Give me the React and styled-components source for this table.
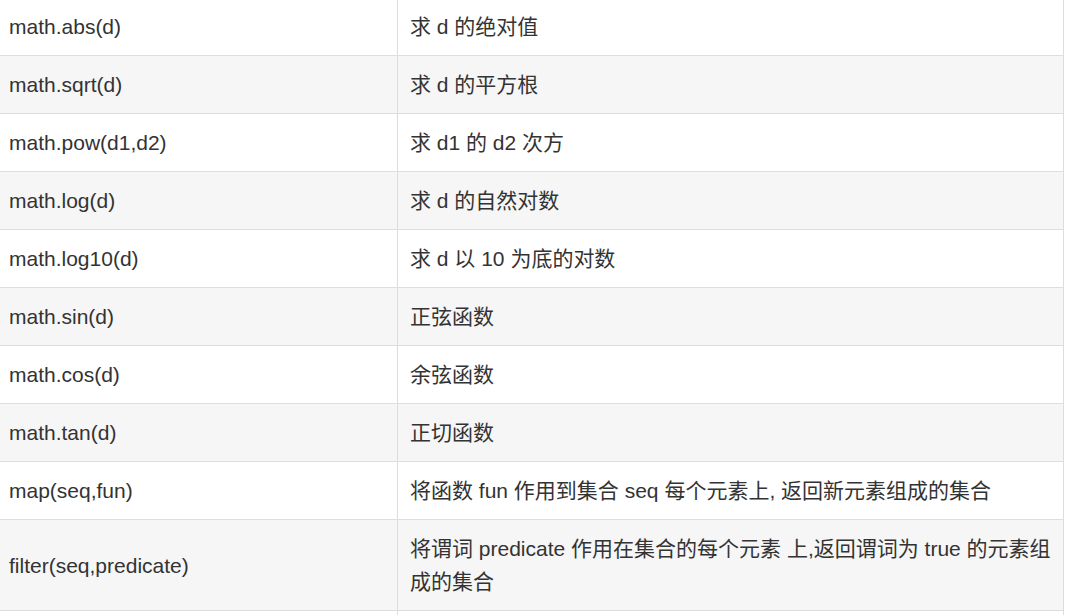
import styled, { createGlobalStyle } from "styled-components";

const GlobalStyle = createGlobalStyle`
  html, body {
    margin: 0;
    padding: 0;
    background: #ffffff;
    overflow: hidden;
  }
`;

const rows = [
  ["math.abs(d)", "求 d 的绝对值"],
  ["math.sqrt(d)", "求 d 的平方根"],
  ["math.pow(d1,d2)", "求 d1 的 d2 次方"],
  ["math.log(d)", "求 d 的自然对数"],
  ["math.log10(d)", "求 d 以 10 为底的对数"],
  ["math.sin(d)", "正弦函数"],
  ["math.cos(d)", "余弦函数"],
  ["math.tan(d)", "正切函数"],
  ["map(seq,fun)", "将函数 fun 作用到集合 seq 每个元素上, 返回新元素组成的集合"],
  ["filter(seq,predicate)", "将谓词 predicate 作用在集合的每个元素 上,返回谓词为 true 的元素组成的集合"],
];

const App = () => {
  return (
    <>
      <GlobalStyle />
      <Page>
        <Table>
          <colgroup>
            <col style={{ width: "401px" }} />
            <col />
          </colgroup>
          <tbody>
            {rows.map(([fn, desc], i) => (
              <Row key={fn} $striped={i % 2 === 1}>
                <Cell>{fn}</Cell>
                <Cell>{desc}</Cell>
              </Row>
            ))}
            <Row $striped={false}>
              <Cell>&nbsp;</Cell>
              <Cell>&nbsp;</Cell>
            </Row>
          </tbody>
        </Table>
      </Page>
    </>
  );
};

export default App;

const Page = styled.div`
  margin: -3px 0 0 -4px;
  width: 1073px;
`;

const Table = styled.table`
  width: 1068px;
  table-layout: fixed;
  border-collapse: collapse;
  font-family: "Liberation Sans", Arial, "Noto Sans CJK SC", sans-serif;
  font-size: 21px;
  color: #333333;
`;

const Row = styled.tr`
  background-color: ${(p) => (p.$striped ? "#f6f6f6" : "#ffffff")};
`;

const Cell = styled.td`
  border: 1px solid #dddddd;
  padding: 12px 12px;
  line-height: 33px;
  vertical-align: middle;
  text-align: left;
`;
